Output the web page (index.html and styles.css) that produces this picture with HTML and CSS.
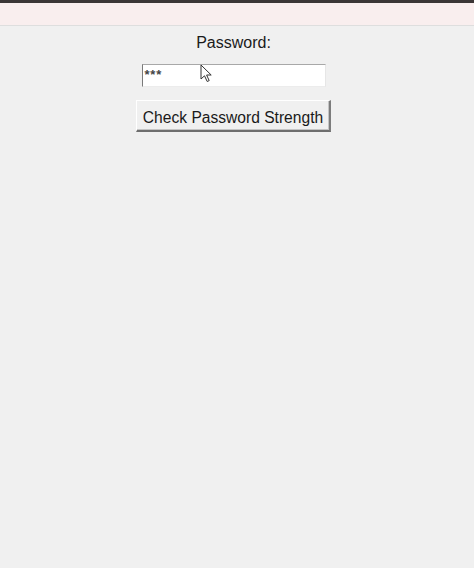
FILE: index.html
```html
<!DOCTYPE html>
<html>
<head>
<meta charset="utf-8">
<link rel="stylesheet" href="styles.css">
</head>
<body>
<div class="topbar"></div>
<div class="titlebar"></div>
<main class="app">
  <div class="label">Password:</div>
  <div class="entry-wrap">
    <div class="entry">***</div>
    <svg class="pointer" width="13" height="19" viewBox="0 0 13 19">
      <path d="M1 1 L1 15 L4.5 11.8 L7.2 17.5 L9.2 16.6 L6.6 11 L11.2 11 Z" fill="#ffffff" stroke="#333333" stroke-width="1" stroke-linejoin="round"/>
    </svg>
  </div>
  <button class="btn">Check Password Strength</button>
</main>
</body>
</html>
```
FILE: styles.css
```css
html, body {
  margin: 0;
  padding: 0;
  background: #f0f0f0;
  font-family: "Liberation Sans", Arial, sans-serif;
  height: 100%;
}
.topbar {
  height: 3px;
  background: #3b3636;
}
.titlebar {
  height: 22px;
  background: #f9eeee;
  border-bottom: 1px solid #dedede;
}
.app {
  width: 467px;
  display: flex;
  flex-direction: column;
  align-items: center;
  padding-top: 8px;
}
.label {
  font-size: 16px;
  line-height: 18px;
  color: #1a1a1a;
  margin-bottom: 12px;
}
.entry-wrap {
  position: relative;
  margin-bottom: 13px;
}
.entry {
  box-sizing: border-box;
  width: 184px;
  height: 23px;
  background: #ffffff;
  border-top: 1px solid #a8a8a8;
  border-left: 1px solid #7a7a7a;
  border-right: 1px solid #e6e6e6;
  border-bottom: 1px solid #ececec;
  font-size: 13px;
  font-weight: bold;
  line-height: 15px;
  letter-spacing: 0.8px;
  padding: 2px 0 0 2px;
  color: #444444;
}
.pointer {
  position: absolute;
  left: 58px;
  top: 0px;
}
.btn {
  box-sizing: border-box;
  width: 195px;
  height: 32px;
  margin: 0;
  padding: 4px 0 0 0;
  background: #f0f0f0;
  border-top: 1px solid #ffffff;
  border-left: 1px solid #ffffff;
  border-right: 2px solid #7c7c7c;
  border-bottom: 2px solid #6e6e6e;
  box-shadow: inset -1px -1px 0 #c4c4c4;
  font-family: "Liberation Sans", Arial, sans-serif;
  font-size: 15.6px;
  color: #1a1a1a;
  text-align: center;
}
```
